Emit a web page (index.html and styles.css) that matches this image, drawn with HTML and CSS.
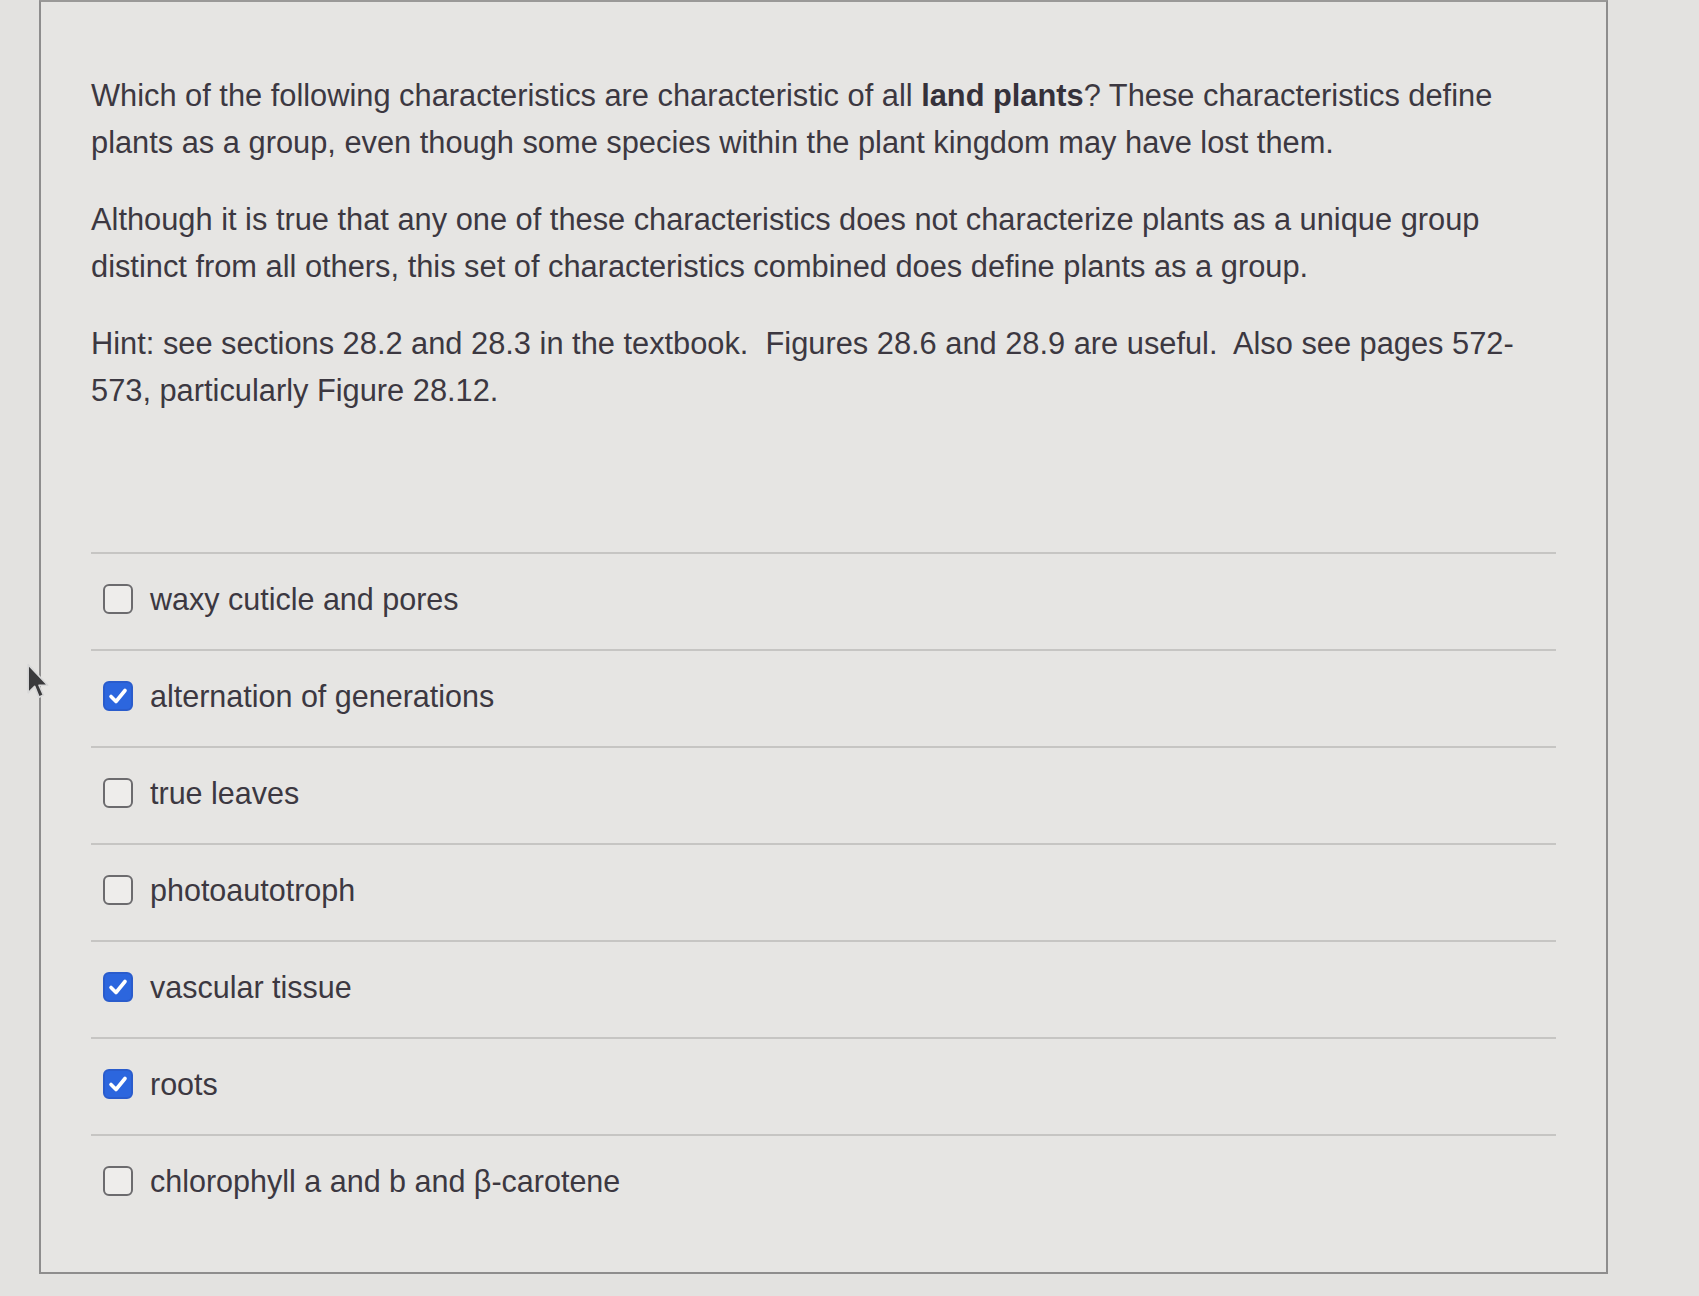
FILE: index.html
```html
<!DOCTYPE html>
<html>
<head>
<meta charset="utf-8">
<link rel="stylesheet" href="styles.css">
</head>
<body>
<div class="page">
  <div class="card">
    <div class="question">
      <p>Which of the following characteristics are characteristic of all <b>land plants</b>? These characteristics define plants as a group, even though some species within the plant kingdom may have lost them.</p>
      <p>Although it is true that any one of these characteristics does not characterize plants as a unique group distinct from all others, this set of characteristics combined does define plants as a group.</p>
      <p>Hint: see sections 28.2 and 28.3 in the textbook.&nbsp; Figures 28.6 and 28.9 are useful.&nbsp; Also see pages 572-573, particularly Figure 28.12.</p>
    </div>
    <ul class="options">
      <li class="option"><span class="box"></span><span class="label">waxy cuticle and pores</span></li>
      <li class="option"><span class="box checked"><svg viewBox="0 0 24 24" width="24" height="24"><path d="M5 12.5 L10 17.5 L19 6.5" fill="none" stroke="#fff" stroke-width="3.6" stroke-linecap="round" stroke-linejoin="round"/></svg></span><span class="label">alternation of generations</span></li>
      <li class="option"><span class="box"></span><span class="label">true leaves</span></li>
      <li class="option"><span class="box"></span><span class="label">photoautotroph</span></li>
      <li class="option"><span class="box checked"><svg viewBox="0 0 24 24" width="24" height="24"><path d="M5 12.5 L10 17.5 L19 6.5" fill="none" stroke="#fff" stroke-width="3.6" stroke-linecap="round" stroke-linejoin="round"/></svg></span><span class="label">vascular tissue</span></li>
      <li class="option"><span class="box checked"><svg viewBox="0 0 24 24" width="24" height="24"><path d="M5 12.5 L10 17.5 L19 6.5" fill="none" stroke="#fff" stroke-width="3.6" stroke-linecap="round" stroke-linejoin="round"/></svg></span><span class="label">roots</span></li>
      <li class="option"><span class="box"></span><span class="label">chlorophyll a and b and β-carotene</span></li>
    </ul>
  </div>
  <svg class="cursor" viewBox="0 0 24 36" width="26" height="40"><path d="M2 2 L2 28 L8 22 L12 32 L16 30 L12 21 L20 21 Z" fill="#3a3a3c" stroke="#d8d8d8" stroke-width="1.5" stroke-linejoin="round"/></svg>
</div>
</body>
</html>
```
FILE: styles.css
```css
html, body {
  margin: 0;
  padding: 0;
  background: #e3e2e0;
}
body {
  font-family: "Liberation Sans", Arial, Helvetica, sans-serif;
  color: #3c3841;
}
.page {
  position: relative;
  width: 1699px;
  height: 1296px;
  overflow: hidden;
}
.card {
  box-sizing: border-box;
  margin-left: 39px;
  width: 1569px;
  height: 1274px;
  border: 2px solid #8e8d8d;
  border-top-color: #9a9998;
  background: #e6e5e3;
  padding: 71px 50px 0 50px;
}
.question {
  font-size: 30.8px;
  line-height: 46.5px;
}
.question p {
  margin: 0 0 31px 0;
}
.question b {
  font-weight: bold;
  color: #35313a;
}
.options {
  list-style: none;
  margin: 138px 0 0 0;
  padding: 0;
}
.option {
  box-sizing: border-box;
  display: flex;
  align-items: center;
  gap: 17px;
  height: 97px;
  border-top: 2px solid #c6c5c3;
  padding: 0 0 6px 12px;
  font-size: 30.5px;
}
.box {
  box-sizing: border-box;
  width: 30px;
  height: 30px;
  border: 2px solid #6c6b6e;
  border-radius: 6px;
  background: #eeedeb;
  display: flex;
  align-items: center;
  justify-content: center;
  flex: none;
}
.box.checked {
  background: #2c66de;
  border-color: #2a5ccc;
}
.label {
  line-height: 34px;
}
.cursor {
  position: absolute;
  left: 26px;
  top: 662px;
}
```
